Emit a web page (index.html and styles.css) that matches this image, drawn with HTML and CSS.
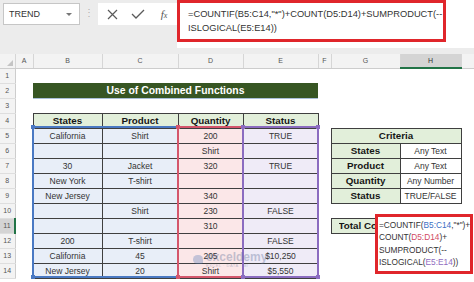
FILE: index.html
```html
<!DOCTYPE html>
<html lang="en">
<head>
    <meta charset="UTF-8">
    <meta name="viewport" content="width=device-width, initial-scale=1.0">
    <title>Use of Combined Functions</title>
    <link rel="stylesheet" href="styles.css">
</head>
<body>
<div id="window">
    <div id="formula-bar">
        <div class="name-box"><span>TREND</span><span class="caret"></span></div>
        <div class="grip">⋮</div>
        <div class="fx-buttons">
            <span class="btn">
                <svg width="11" height="11" viewBox="0 0 11 11"><path d="M1 1 L10 10 M10 1 L1 10" stroke="#5a5a5a" stroke-width="1.2" fill="none"/></svg>
            </span>
            <span class="btn">
                <svg width="14" height="10" viewBox="0 0 14 10"><path d="M1 5 L5 9 L13 1" stroke="#5a5a5a" stroke-width="1.3" fill="none"/></svg>
            </span>
            <span class="btn fx"><i>f</i><i class="sub">x</i></span>
        </div>
        <div class="formula-area">
            <div class="formula-input">=COUNTIF(B5:C14,"*")+COUNT(D5:D14)+SUMPRODUCT(--<br>ISLOGICAL(E5:E14))</div>
        </div>
    </div>

    <table id="sheet">
        <colgroup>
            <col class="w-rh"><col class="w-a"><col class="w-b"><col class="w-c"><col class="w-d">
            <col class="w-e"><col class="w-f"><col class="w-g"><col class="w-h"><col class="w-i">
        </colgroup>
        <thead>
            <tr class="col-heads">
                <th class="corner"><span class="tri"></span></th>
                <th>A</th><th>B</th><th>C</th><th>D</th><th>E</th><th>F</th><th>G</th>
                <th class="selected">H</th><th></th>
            </tr>
        </thead>
        <tbody>
            <tr><th>1</th><td></td><td></td><td></td><td></td><td></td><td></td><td></td><td></td><td></td></tr>
            <tr><th>2</th><td></td><td colspan="4" class="title">Use of Combined Functions</td><td></td><td></td><td></td><td></td></tr>
            <tr><th>3</th><td></td><td></td><td></td><td></td><td></td><td></td><td></td><td></td><td></td></tr>
            <tr>
                <th>4</th><td></td>
                <td class="head">States</td><td class="head">Product</td><td class="head">Quantity</td><td class="head">Status</td>
                <td></td><td></td><td></td><td></td>
            </tr>
            <tr>
                <th>5</th><td></td>
                <td class="ref-b">California</td><td class="ref-b">Shirt</td><td class="ref-d">200</td><td class="ref-e">TRUE</td>
                <td></td><td colspan="2" class="head">Criteria</td><td></td>
            </tr>
            <tr>
                <th>6</th><td></td>
                <td class="ref-b"></td><td class="ref-b"></td><td class="ref-d">Shirt</td><td class="ref-e"></td>
                <td></td><td class="head">States</td><td class="value">Any Text</td><td></td>
            </tr>
            <tr>
                <th>7</th><td></td>
                <td class="ref-b">30</td><td class="ref-b">Jacket</td><td class="ref-d">320</td><td class="ref-e">TRUE</td>
                <td></td><td class="head">Product</td><td class="value">Any Text</td><td></td>
            </tr>
            <tr>
                <th>8</th><td></td>
                <td class="ref-b">New York</td><td class="ref-b">T-shirt</td><td class="ref-d"></td><td class="ref-e"></td>
                <td></td><td class="head">Quantity</td><td class="value">Any Number</td><td></td>
            </tr>
            <tr>
                <th>9</th><td></td>
                <td class="ref-b">New Jersey</td><td class="ref-b"></td><td class="ref-d">340</td><td class="ref-e"></td>
                <td></td><td class="head">Status</td><td class="value">TRUE/FALSE</td><td></td>
            </tr>
            <tr>
                <th>10</th><td></td>
                <td class="ref-b"></td><td class="ref-b">Shirt</td><td class="ref-d">230</td><td class="ref-e">FALSE</td>
                <td></td><td></td><td></td><td></td>
            </tr>
            <tr>
                <th class="selected">11</th><td></td>
                <td class="ref-b"></td><td class="ref-b"></td><td class="ref-d">310</td><td class="ref-e"></td>
                <td></td><td class="head total"><span>Total Count</span></td><td class="head"></td><td></td>
            </tr>
            <tr>
                <th>12</th><td></td>
                <td class="ref-b">200</td><td class="ref-b">T-shirt</td><td class="ref-d"></td><td class="ref-e">FALSE</td>
                <td></td><td></td><td></td><td></td>
            </tr>
            <tr>
                <th>13</th><td></td>
                <td class="ref-b">California</td><td class="ref-b">45</td><td class="ref-d">205</td><td class="ref-e">$10,250</td>
                <td></td><td></td><td></td><td></td>
            </tr>
            <tr>
                <th>14</th><td></td>
                <td class="ref-b">New Jersey</td><td class="ref-b">20</td><td class="ref-d">Shirt</td><td class="ref-e">$5,550</td>
                <td></td><td></td><td></td><td></td>
            </tr>
        </tbody>
    </table>

    <!-- range highlights while the formula is edited -->
    <div class="range range-b"><span class="h tl"></span><span class="h tr"></span><span class="h bl"></span><span class="h br"></span></div>
    <div class="range range-d"><span class="h tl"></span><span class="h tr"></span><span class="h bl"></span><span class="h br"></span></div>
    <div class="range range-e"><span class="h tl"></span><span class="h tr"></span><span class="h bl"></span><span class="h br"></span></div>

    <div class="watermark">
        <span class="logo"></span>
        <div class="brand">exceldemy<small>EXCEL · DATA · BI</small></div>
    </div>

    <div class="cell-editor">=COUNTIF(<span class="c-b">B5:C14</span>,"*")+<br>COUNT(<span class="c-d">D5:D14</span>)+<br>SUMPRODUCT(--<br>ISLOGICAL(<span class="c-e">E5:E14</span>))</div>
</div>
</body>
</html>
```

FILE: styles.css
```css
* {
    margin: 0;
    padding: 0;
}
body {
    font-family: "Liberation Sans", Arial, sans-serif;
    background: #fff;
}
#window {
    position: relative;
    width: 474px;
    height: 282px;
    overflow: hidden;
}

/* formula bar */
#formula-bar {
    display: flex;
    height: 54px;
    background: #ececec;
}
.name-box {
    margin: 3px 0 0 3px;
    width: 77px;
    height: 22px;
    box-sizing: border-box;
    border: 1px solid #c6c6c6;
    background: #fff;
    display: flex;
    align-items: center;
    justify-content: space-between;
    padding: 0 7px 0 5px;
    font-size: 9px;
    color: #333;
}
.caret {
    border-left: 3px solid transparent;
    border-right: 3px solid transparent;
    border-top: 3px solid #777;
}
.grip {
    width: 18px;
    margin-top: 7px;
    text-align: center;
    font-size: 10px;
    color: #b0b0b0;
}
.fx-buttons {
    margin-top: 3px;
    width: 79px;
    height: 22px;
    background: #fff;
    display: flex;
    align-items: center;
    padding-left: 1px;
    box-sizing: border-box;
}
.btn {
    width: 26px;
    display: flex;
    justify-content: center;
    align-items: center;
}
.fx {
    font-family: "Liberation Serif", serif;
    font-size: 11px;
    color: #555;
}
.fx .sub {
    font-size: 8px;
    margin-top: 3px;
}
.formula-area {
    flex: 1;
    height: 48px;
    background: #fff;
}
.formula-input {
    width: 269px;
    height: 42px;
    box-sizing: border-box;
    border: 3px solid #e0262b;
    padding: 5px 0 0 8px;
    font-size: 9.3px;
    line-height: 13.5px;
    color: #333;
    white-space: nowrap;
}

/* grid */
#sheet {
    border-collapse: collapse;
    table-layout: fixed;
    width: 474px;
}
col.w-rh { width: 15px; }
col.w-a { width: 18px; }
col.w-b { width: 69px; }
col.w-c { width: 76px; }
col.w-d { width: 65px; }
col.w-e { width: 75px; }
col.w-f { width: 13px; }
col.w-g { width: 69px; }
col.w-h { width: 61px; }
col.w-i { width: 13px; }

#sheet th,
#sheet td {
    padding: 0;
    text-align: center;
    white-space: nowrap;
    overflow: hidden;
    font-size: 8.5px;
    color: #333;
}
#sheet tbody tr {
    height: 15px;
}
.col-heads th {
    height: 13px;
    background: #f3f3f3;
    border-right: 1px solid #d6d6d6;
    border-bottom: 1px solid #cdcdcd;
    font-weight: normal;
    font-size: 7px !important;
    color: #555 !important;
}
.col-heads th.corner {
    position: relative;
}
.tri {
    position: absolute;
    right: 2px;
    bottom: 2px;
    border-left: 6px solid transparent;
    border-bottom: 6px solid #c4c4c4;
}
.col-heads th.selected {
    background: #d4d4d4;
    border-bottom: 2px solid #217346;
    color: #333 !important;
}
#sheet tbody th {
    background: #f3f3f3;
    border-right: 1px solid #cdcdcd;
    border-bottom: 1px solid #dedede;
    font-weight: normal;
    font-size: 7px;
    color: #555;
}
#sheet tbody th.selected {
    background: #d4d4d4;
    border-right: 2px solid #217346;
}

.title {
    background: #375623;
    color: #fff !important;
    font-weight: bold;
    font-size: 10.4px !important;
    border-bottom: 1px solid #a9bfd8;
}
.head {
    background: #e2efda;
    border: 1px solid #3f3f3f;
    font-weight: bold;
    font-size: 9.8px !important;
    color: #161616 !important;
}
.value {
    border: 1px solid #3f3f3f;
    background: #fff;
}
.ref-b,
.ref-d,
.ref-e {
    border: 1px solid #3f3f3f;
}
.ref-b { background: #e8eef8; }
.ref-d { background: #fbe7e8; }
.ref-e { background: #efebf7; }

/* text runs on under the editor, so it is cut where the editor starts */
#sheet td.total {
    text-align: left;
}
.total span {
    display: block;
    width: 37px;
    margin-left: 7px;
    overflow: hidden;
}

/* coloured range outlines */
.range {
    position: absolute;
    top: 126px;
    height: 152px;
    box-sizing: border-box;
    border: 2px solid;
}
.range-b { left: 32px; width: 147px; border-color: #4a79c3; }
.range-d { left: 177px; width: 67px; border-color: #d4566c; }
.range-e { left: 242px; width: 77px; border-color: #8b6cc0; }
.range .h {
    position: absolute;
    width: 4px;
    height: 4px;
}
.range-b .h { background: #4a79c3; }
.range-d .h { background: #d4566c; }
.range-e .h { background: #8b6cc0; }
.h.tl { left: -3px; top: -3px; }
.h.tr { right: -3px; top: -3px; }
.h.bl { left: -3px; bottom: -3px; }
.h.br { right: -3px; bottom: -3px; }

/* editor over H11 */
.cell-editor {
    position: absolute;
    left: 375px;
    top: 214px;
    width: 98px;
    height: 60px;
    box-sizing: border-box;
    border: 3px solid #e0262b;
    background: #fff;
    padding: 2px 0 0 1px;
    font-size: 8.3px;
    line-height: 12.4px;
    color: #333;
    white-space: nowrap;
}
.c-b { color: #3b6fc4; }
.c-d { color: #d14a64; }
.c-e { color: #8f6bc0; }

.watermark {
    position: absolute;
    left: 193px;
    top: 251px;
    display: flex;
    align-items: center;
    gap: 3px;
    opacity: 0.35;
}
.logo {
    width: 10px;
    height: 9px;
    border-radius: 5px 5px 2px 5px;
    background: #5c7fb8;
}
.brand {
    font-size: 12px;
    font-weight: bold;
    color: #5c6f99;
    line-height: 12px;
}
.brand small {
    display: block;
    font-size: 4px;
    line-height: 5px;
    letter-spacing: 0.5px;
    font-weight: normal;
}
```
